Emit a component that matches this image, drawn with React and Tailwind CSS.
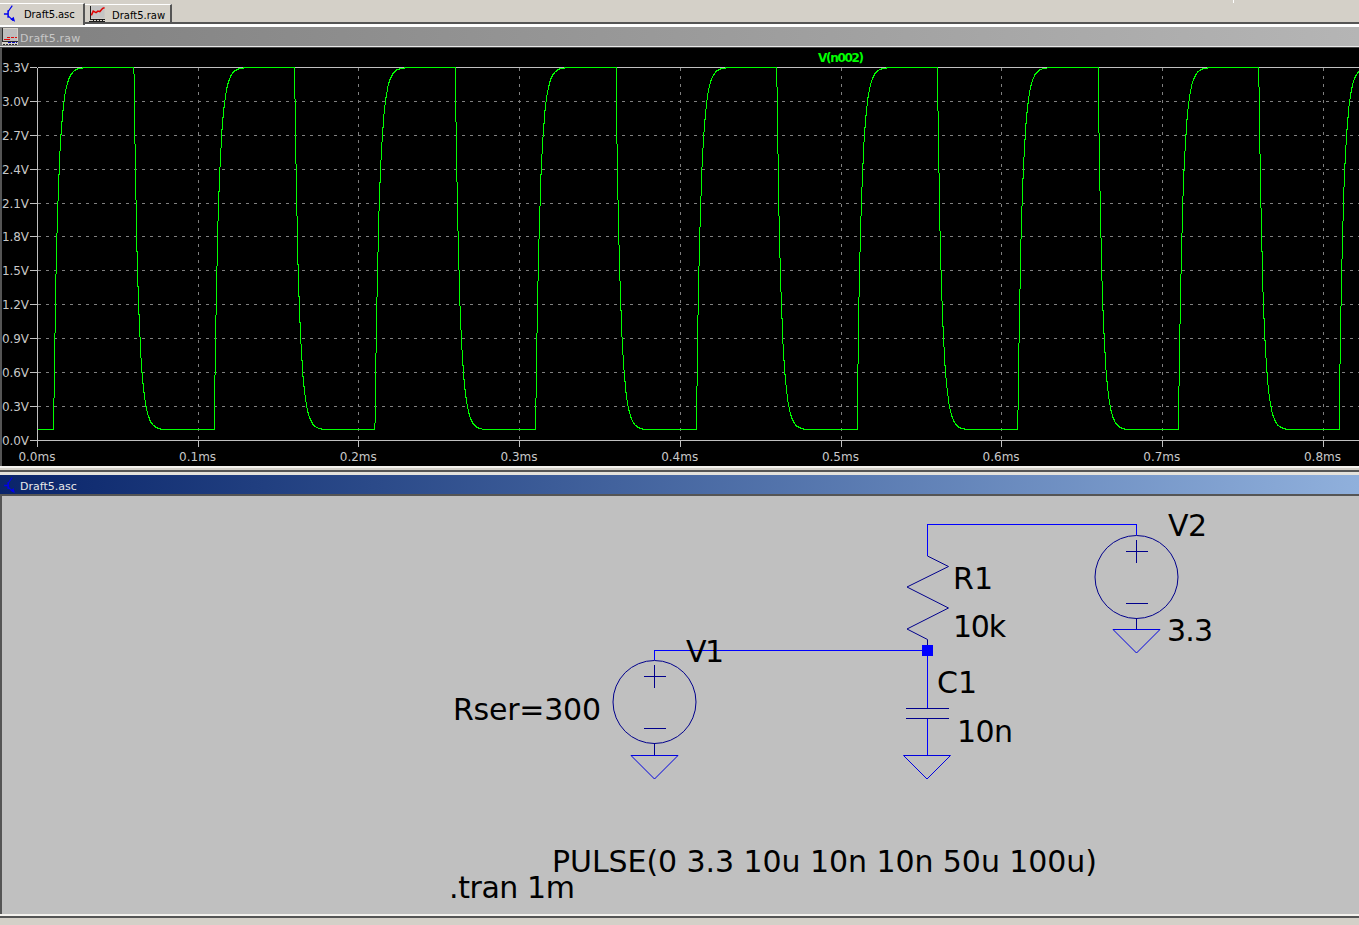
import React from "react";

const FONT = "'DejaVu Sans', sans-serif";

// plot scale
const X0 = 37.5;
const PX_PER_MS = 1607;
const Y_TOP = 19.5;
const Y_BOTTOM = 392;
const xAt = (ms) => X0 + ms * PX_PER_MS;
const yAt = (v) => Y_BOTTOM - (v * (Y_BOTTOM - Y_TOP)) / 3.3;
const snap = (n) => Math.floor(n + 0.1) + 0.5;

const voltTicks = ["0.0", "0.3", "0.6", "0.9", "1.2", "1.5", "1.8", "2.1", "2.4", "2.7", "3.0", "3.3"];
const timeTicks = ["0.0", "0.1", "0.2", "0.3", "0.4", "0.5", "0.6", "0.7", "0.8"];

// V(n002): RC charge and discharge
const buildTrace = () => {
  const tau = 0.00275;
  const low = 0.09;
  const pts = [];
  const push = (t, v) => {
    const x = Math.round(xAt(t) - 0.5) + 0.5;
    const y = Math.round(yAt(v) - 0.5) + 0.5;
    const last = pts[pts.length - 1];
    if (!last || last[0] !== x || last[1] !== y) pts.push([x, y]);
  };
  push(0, low);
  for (let k = 0; k < 9; k++) {
    const rise = 0.01 + k * 0.1;
    const fall = rise + 0.05;
    for (let t = 0; t < 0.05; t += 0.0001) {
      if (xAt(rise + t) > 1360) break;
      push(rise + t, 3.3 - (3.3 - low) * Math.exp(-t / tau));
    }
    for (let t = 0; t < 0.05; t += 0.0001) {
      if (xAt(fall + t) > 1360) break;
      push(fall + t, low + (3.3 - low) * Math.exp(-t / tau));
    }
  }
  return pts.map((p) => p.join(",")).join(" ");
};

const TransistorIcon = ({ className }) => (
  <svg className={className} viewBox="0 0 14 18" fill="none" stroke="#0000f0">
    <path d="M1 9.5H5M5.5 5.5V13.5" strokeWidth="1.6" />
    <path d="M5.5 7L10 0.5M5.5 11.5L11 16.5" strokeWidth="1.2" />
    <path d="M8 15.5L13 18L11.5 12.5Z" fill="#0000f0" stroke="none" />
  </svg>
);

const PlotIcon = ({ className }) => (
  <svg className={className} viewBox="0 0 16 18" fill="none">
    <path d="M2 1H16V14H2Z" fill="#c4c4c4" stroke="none" />
    <path d="M1.5 1V15.5H16" stroke="#111" shapeRendering="crispEdges" />
    <path d="M0 17.5H16M4.5 15V17M7.5 15V17M10.5 15V17M13.5 15V17" stroke="#111" shapeRendering="crispEdges" />
    <path d="M2 11L4 6.5L7 8L9 6.5L11 7L14 3.5L16 3" stroke="#e00000" strokeWidth="1.6" />
  </svg>
);

const WaveIcon = ({ className }) => (
  <svg className={className} viewBox="0 0 16 18" fill="none" shapeRendering="crispEdges">
    <path d="M0 0H16V18H0Z" fill="#d4d0c8" />
    <path d="M1 1H15V15H1Z" fill="#bdbdbd" />
    <path d="M0.5 0V14.5H16" stroke="#222" />
    <path d="M5 10.5H15" stroke="#e00000" strokeDasharray="3 1" />
    <path d="M2 12.5H8" stroke="#e00000" />
    <path d="M6 15.5H15" stroke="#0000c0" strokeDasharray="3 1" />
    <path d="M1 17.5H15" stroke="#222" strokeDasharray="2 1" />
  </svg>
);

const Plot = () => (
  <div className="h-[418px] bg-black border-l-2 border-[#555]">
    <svg className="block -ml-[2px]" width="1359" height="418" style={{ fontFamily: FONT }}>
      <text x="818" y="14" fontSize="12" fontWeight="600" fill="#00ff00" textLength="46">V(n002)</text>
      {voltTicks.map((v, i) => {
        const y = snap(yAt(i * 0.3));
        const edge = i === 0 || i === voltTicks.length - 1;
        return (
          <g key={v}>
            <path d={`M30 ${y}H37`} stroke="#c0c0c0" shapeRendering="crispEdges" />
            <path
              d={`M37.5 ${y}H1359`}
              stroke={edge ? "#c0c0c0" : "#808080"}
              strokeDasharray={edge ? undefined : "3 5"}
              shapeRendering="crispEdges"
            />
            <text x="2" y={y + 4.5} fontSize="12" fill="#c8c8c8" textLength="27">{v}V</text>
          </g>
        );
      })}
      {timeTicks.map((t, i) => {
        const x = Math.round(xAt(i * 0.1) - 0.5) + 0.5;
        return (
          <g key={t}>
            <path
              d={`M${x} ${Y_TOP}V${Y_BOTTOM}`}
              stroke={i === 0 ? "#c0c0c0" : "#808080"}
              strokeDasharray={i === 0 ? undefined : "3 5"}
              shapeRendering="crispEdges"
            />
            <path d={`M${x} ${Y_BOTTOM}V399`} stroke="#c0c0c0" shapeRendering="crispEdges" />
            <text x={xAt(i * 0.1) - 0.6} y="413" fontSize="12" fill="#c8c8c8" textAnchor="middle">{t}ms</text>
          </g>
        );
      })}
      <polyline points={buildTrace()} fill="none" stroke="#00ff00" shapeRendering="crispEdges" />
    </svg>
  </div>
);

const Ground = ({ x, y }) => (
  <path d={`M${x - 23.5} ${y}H${x + 23.5}L${x} ${y + 23.5}Z`} fill="none" stroke="#0000e0" />
);

const Source = ({ x, y }) => (
  <g stroke="#00008c" fill="none">
    <circle cx={x} cy={y} r="41.5" />
    <path d={`M${x - 11} ${y - 25.5}H${x + 11}M${x} ${y - 37}V${y - 14}`} shapeRendering="crispEdges" />
    <path d={`M${x - 11} ${y + 26.5}H${x + 11}`} shapeRendering="crispEdges" />
    <path d={`M${x} ${y + 41}V${y + 53}`} shapeRendering="crispEdges" />
  </g>
);

// schematic coords are page coords minus the 496px top of the sheet
const Schematic = () => {
  const labels = [
    ["V2", 1168, 40, 39],
    ["R1", 953, 93, 40],
    ["10k", 953, 141, 53],
    ["C1", 937, 197],
    ["10n", 957, 246, 56],
    ["3.3", 1167, 145, 46],
    ["V1", 686, 166, 38],
    ["Rser=300", 453, 224, 148],
    ["PULSE(0 3.3 10u 10n 10n 50u 100u)", 552, 376, 545],
    [".tran 1m", 449, 402, 126],
  ];
  return (
    <div className="h-[418px] bg-[#c0c0c0] border-l-2 border-[#555]">
      <svg className="block -ml-[2px]" width="1359" height="418" style={{ fontFamily: FONT }}>
        <g transform="translate(0 -496)">
          <path
            d="M927.5 556V524.5H1136.5V535M654.5 660V650.5H927.5M927.5 650V708M927.5 718V755"
            fill="none"
            stroke="#0000ff"
            shapeRendering="crispEdges"
          />
          <path
            d="M927.5 556L948.5 566.5L907 587L948.5 608L907 629L927.5 639.5V650"
            fill="none"
            stroke="#00008c"
          />
          <path d="M906 708.5H949M906 718.5H949" fill="none" stroke="#00008c" shapeRendering="crispEdges" />
          <rect x="922" y="645" width="11" height="11" fill="#0000ff" />
          <Source x={1136.5} y={577} />
          <Source x={654.5} y={702} />
          <Ground x={1136.5} y={629.5} />
          <Ground x={654.5} y={755.5} />
          <Ground x={927} y={755.5} />
          {labels.map(([text, x, y, len]) => (
            <text key={text} x={x} y={y + 496} fontSize="30" fill="#000" textLength={len}>{text}</text>
          ))}
        </g>
      </svg>
    </div>
  );
};

export default function App() {
  return (
    <div className="relative w-[1359px] h-[925px] overflow-hidden bg-[#d4d0c8] font-['DejaVu_Sans',sans-serif]">
      {/* MDI tabs */}
      <div className="h-[27px] flex items-start bg-[#d4d0c8] border-b-[3px] border-white shadow-[inset_0_-2px_0_#555]">
        <div className="w-[85px] h-[22px] mt-[3px] flex items-center bg-[#d4d0c8] border-t border-white border-r-2 border-r-[#555]">
          <TransistorIcon className="w-[13px] h-[17px] ml-[3px] -mt-[3px]" />
          <span className="ml-[8px] text-[10px] tracking-[-0.1px] text-black">Draft5.asc</span>
        </div>
        <div className="w-[87px] h-[18px] mt-[4px] flex items-center bg-[#d4d0c8] border-t border-white border-r-2 border-r-[#555]">
          <PlotIcon className="w-[16px] h-[17px] ml-[4px]" />
          <span className="ml-[7px] mt-[3px] text-[10px] text-black">Draft5.raw</span>
        </div>
      </div>

      {/* plot window */}
      <div className="h-[19px] flex items-center bg-gradient-to-r from-[#808080] to-[#b5b5b5]">
        <WaveIcon className="w-[16px] h-[17px] ml-[2px]" />
        <span className="ml-[2px] mt-[5px] text-[11px] tracking-[0.2px] text-[#c8c8c8]">Draft5.raw</span>
      </div>
      <div className="h-[2px] bg-[#e8e8e8] border-b border-[#444]" />
      <Plot />
      <div className="h-[9px] bg-[#d4d0c8] border-t-2 border-[#f4f2ee] shadow-[inset_0_-3px_0_#e4e2dc,inset_0_-5px_0_#555]" />

      {/* schematic window */}
      <div className="h-[19px] flex items-center bg-gradient-to-r from-[#0a246a] to-[#90b0dc]">
        <TransistorIcon className="w-[13px] h-[16px] ml-[3px]" />
        <span className="ml-[4px] mt-[5px] text-[11px] text-[#e8e8e8]">Draft5.asc</span>
      </div>
      <div className="h-[2px] bg-[#555]" />
      <Schematic />
      <div className="h-[9px] bg-[#d4d0c8] border-t-2 border-[#f4f2ee] shadow-[inset_0_-5px_0_#d4d0c8,inset_0_-7px_0_#555]" />

      <div className="absolute left-[1233px] top-0 w-px h-[3px] bg-white" />
    </div>
  );
}
